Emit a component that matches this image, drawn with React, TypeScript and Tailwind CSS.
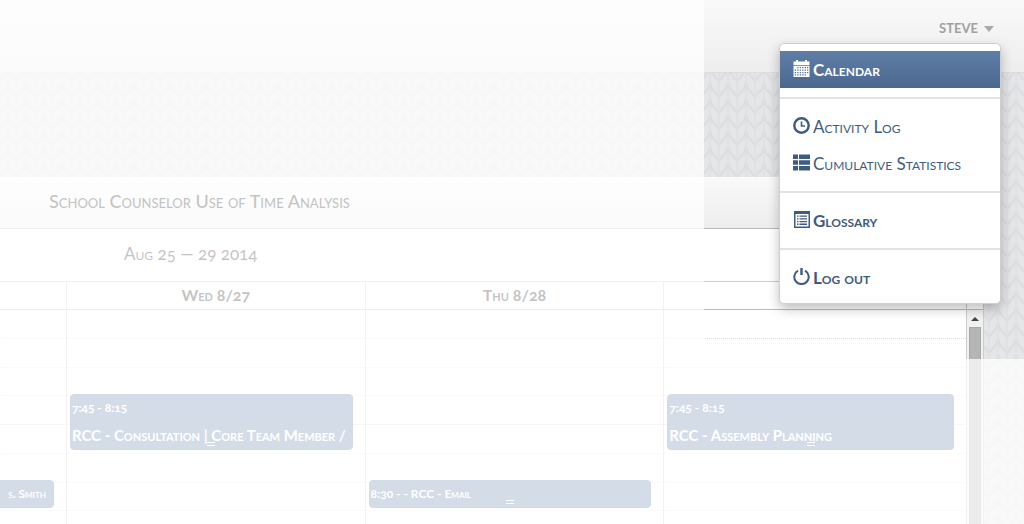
import type { ReactNode } from "react";

type CalendarEvent = {
  time: string;
  title: string;
  size: "tall" | "short";
};

type Day = { label: string; event: CalendarEvent };

const days: Day[] = [
  { label: "", event: { time: "", title: "s. Smith", size: "short" } },
  {
    label: "Wed 8/27",
    event: { time: "7:45 - 8:15", title: "RCC - Consultation | Core Team Member /", size: "tall" },
  },
  { label: "Thu 8/28", event: { time: "8:30 -", title: "- RCC - Email", size: "short" } },
  { label: "", event: { time: "7:45 - 8:15", title: "RCC - Assembly Planning", size: "tall" } },
];

const slots = [0, 1, 2, 3, 4, 5, 6, 7];

function KnitBackground() {
  return (
    <svg className="absolute inset-0 -z-10 h-full w-full" aria-hidden="true">
      <defs>
        <pattern id="knit" width="18" height="16" patternUnits="userSpaceOnUse" x="8" y="6">
          <rect width="18" height="16" fill="#e5e6e8" />
          <g fill="none" stroke="#dddee1" strokeWidth="2.600" strokeLinejoin="round">
            <path d="M0 -19Q1 -13 4.500 -10.500L9 -5L13.500 -10.500Q17 -13 18 -19" />
            <path d="M0 -3Q1 3 4.500 5.500L9 11L13.500 5.500Q17 3 18 -3" />
            <path d="M0 13Q1 19 4.500 21.500L9 27L13.500 21.500Q17 19 18 13" />
          </g>
          <path d="M0 0V16M18 0V16M9 0V16" stroke="#dfe0e3" strokeWidth="1.600" />
        </pattern>
      </defs>
      <rect width="100%" height="100%" fill="url(#knit)" />
    </svg>
  );
}

function Icon({ children }: { children: ReactNode }) {
  return (
    <svg viewBox="0 0 17 17" className="mb-0.5 size-[17px] shrink-0" fill="currentColor" aria-hidden="true">
      {children}
    </svg>
  );
}

function CalendarIcon() {
  return (
    <Icon>
      <path d="M3 0h2v1.500h7V0h2v1.500h2.500V5H.5V1.500H3z" />
      <path
        fillRule="evenodd"
        d="M.5 5.700h16V17H.5zM4.200 7v1.300h1.300V7zM6.700 7v1.300H8V7zM9.200 7v1.300h1.300V7zM11.700 7v1.300H13V7zM14 7v1.300h1.300V7zM1.700 9.500v1.300H3V9.500zM4.200 9.500v1.300h1.300V9.500zM6.700 9.500v1.300H8V9.500zM9.200 9.500v1.300h1.300V9.500zM11.700 9.500v1.300H13V9.500zM14 9.500v1.300h1.300V9.500zM1.700 12v1.300H3V12zM4.200 12v1.300h1.300V12zM6.700 12v1.300H8V12zM9.200 12v1.300h1.300V12zM11.700 12v1.300H13V12zM14 12v1.300h1.300V12zM1.700 14.300v1.300H3v-1.300zM4.200 14.300v1.300h1.300v-1.300zM6.700 14.300v1.300H8v-1.300zM9.200 14.300v1.300h1.300v-1.300zM11.700 14.300v1.300H13v-1.300z"
      />
    </Icon>
  );
}

function ClockIcon() {
  return (
    <Icon>
      <circle cx="8.500" cy="8.500" r="7.200" fill="none" stroke="currentColor" strokeWidth="2.400" />
      <path d="M8.500 4.500V9H12" fill="none" stroke="currentColor" strokeWidth="1.600" />
    </Icon>
  );
}

function ThListIcon() {
  return (
    <Icon>
      <path d="M0 .5h5v4.500H0zM6 .5h11v4.500H6zM0 6.200h5v4.500H0zM6 6.200h11v4.500H6zM0 12h5v4.500H0zM6 12h11v4.500H6z" />
    </Icon>
  );
}

function ListAltIcon() {
  return (
    <Icon>
      <path fillRule="evenodd" d="M1 0h16v17H1zM2.500 3v12.500h13V3z" />
      <path d="M4 4.500h1.500v1.300H4zM6.500 4.500H14v1.300H6.500zM4 7.200h1.500v1.300H4zM6.500 7.200H14v1.300H6.500zM4 9.900h1.500v1.300H4zM6.500 9.900H14v1.300H6.500zM4 12.600h1.500v1.300H4zM6.500 12.600H14v1.300H6.500z" />
    </Icon>
  );
}

function PowerIcon() {
  return (
    <Icon>
      <path d="M5 2.600A7.200 7.200 0 1 0 12 2.600" fill="none" stroke="currentColor" strokeWidth="2" />
      <path d="M7.300 0h2.400v7H7.300z" />
    </Icon>
  );
}

function MenuItem({ icon, label, bold }: { icon: ReactNode; label: string; bold?: boolean }) {
  return (
    <a
      href="#"
      className={`flex h-[37px] items-center gap-[3px] px-[13px] text-[#3e5b80] ${bold ? "font-bold" : ""}`}
    >
      {icon}
      {label}
    </a>
  );
}

function Divider() {
  return <hr className="my-[9px] border-t-2 border-[#e2e2e2]" />;
}

function UserMenu() {
  return (
    <nav className="absolute top-[43px] right-0 z-30 w-[222px] rounded-[5px] border border-[#cfcfcf] bg-white py-[7px] text-[17px] text-[#3e5b80] shadow-[0_5px_12px_rgba(0,0,0,0.25)] [font-variant-caps:small-caps]">
      <a
        href="#"
        aria-current="page"
        className="flex h-[37px] items-center gap-[3px] bg-linear-to-b from-[#5f7ea7] to-[#4b688f] px-[13px] font-bold text-white"
      >
        <CalendarIcon />
        Calendar
      </a>
      <Divider />
      <MenuItem icon={<ClockIcon />} label="Activity Log" />
      <MenuItem icon={<ThListIcon />} label="Cumulative Statistics" />
      <Divider />
      <MenuItem icon={<ListAltIcon />} label="Glossary" bold />
      <Divider />
      <MenuItem icon={<PowerIcon />} label="Log out" bold />
    </nav>
  );
}

function EventCard({ event }: { event: CalendarEvent }) {
  const tall = event.size === "tall";
  const clipped = event.time === "";
  return (
    <div
      className={`absolute right-3 overflow-hidden rounded-[4px] border border-[#4a6d98] bg-[#5474a0] px-px font-bold whitespace-nowrap text-white ${
        tall ? "top-[84px] h-14" : "top-[170px] h-7"
      } ${clipped ? "-left-2" : "left-[3px]"}`}
    >
      {tall ? (
        <>
          <div className="h-[26px] text-xs leading-[26px]">{event.time}</div>
          <div className="text-[15px] leading-7">{event.title}</div>
        </>
      ) : (
        <div className={`text-xs leading-[26px] ${clipped ? "pr-1.5 text-right" : ""}`}>
          {event.time} {event.title}
        </div>
      )}
      {!clipped && (
        <div className="absolute bottom-[3px] left-1/2 h-1 w-2 -translate-x-1/2 border-y border-white" />
      )}
    </div>
  );
}

function DayColumn({ day }: { day: Day }) {
  return (
    <div className="min-w-0 border-r border-[#ccc]">
      <div className="h-7 border-b border-[#bbb] text-center text-base leading-[26px] font-bold">{day.label}</div>
      <div className="relative flex h-[230px] flex-col">
        {slots.map((slot) => (
          <div
            key={slot}
            className={`flex-1 border-b border-[#ddd] ${slot % 4 === 3 ? "border-solid" : "border-dotted"}`}
          />
        ))}
        <EventCard event={day.event} />
      </div>
    </div>
  );
}

export default function App() {
  return (
    <div className="relative isolate h-screen overflow-hidden font-['Lato','Open_Sans',sans-serif] text-[#111] [font-variant-numeric:oldstyle-nums]">
      <KnitBackground />

      <header className="flex h-[73px] justify-end border-b border-[#ddd] bg-linear-to-b from-[#f9f9f9] to-[#eeeeee] pr-[23px]">
        <div className="relative">
          <button
            type="button"
            aria-expanded="true"
            className="mt-[17px] mr-[7px] flex h-6 items-center gap-1.5 text-[13px] font-bold text-[#a0a0a0]"
          >
            STEVE
            <span className="border-x-[5px] border-t-[6px] border-x-transparent border-t-[#aaa]" />
          </button>
          <UserMenu />
        </div>
      </header>

      <main className="mt-[104px] mr-10 border-r border-[#ccc] bg-white [font-variant-caps:small-caps]">
        <h1 className="h-[52px] border-b border-[#bbb] bg-linear-to-b from-[#fafafa] to-[#ededed] pl-[49px] text-lg leading-[49px] font-medium">
          School Counselor Use of Time Analysis
        </h1>
        <h2 className="h-[53px] border-b border-[#ccc] pl-[124px] text-[17px] leading-[49px]">Aug 25 — 29 2014</h2>
        <div className="flex">
          <div className="grid flex-1 grid-cols-[67fr_299fr_299fr_303fr]">
            {days.map((day, index) => (
              <DayColumn key={index} day={day} />
            ))}
          </div>
          <div className="flex w-4 flex-col bg-[#f1f1f1]">
            <div className="h-7 border-b border-[#bbb] bg-white" />
            <div className="flex h-[17px] items-center justify-center">
              <span className="border-x-4 border-b-4 border-x-transparent border-b-[#444]" />
            </div>
            <div className="mx-0.5 flex-1 border border-[#a8a8a8] bg-[#b5b5b5]" />
          </div>
        </div>
      </main>

      <div className="pointer-events-none absolute top-0 right-0 z-20 h-[359px] w-80 shadow-[0_0_0_2000px_rgba(255,255,255,0.75)]" />
    </div>
  );
}
